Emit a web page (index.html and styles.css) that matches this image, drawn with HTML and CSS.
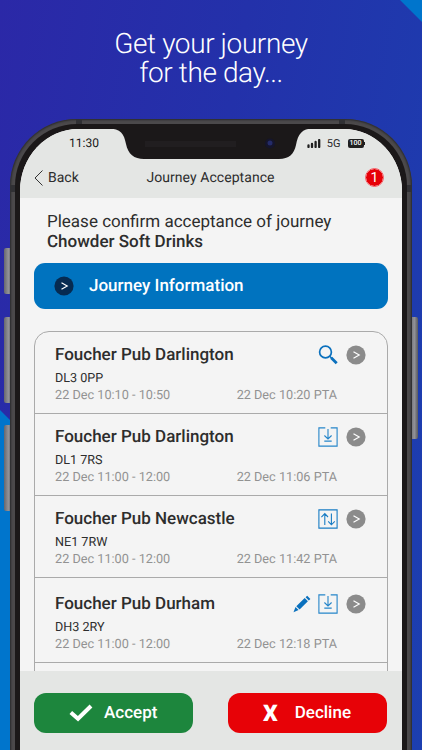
FILE: index.html
```html
<!DOCTYPE html>
<html lang="en">
<head>
<meta charset="utf-8">
<title>Journey Acceptance</title>
<link rel="stylesheet" href="styles.css">
</head>
<body>
<svg class="symbols" width="0" height="0" aria-hidden="true">
  <symbol id="chevron" viewBox="0 0 20 20"><circle cx="10" cy="10" r="9.6" fill="currentColor"/><path d="M7.5 6.7 L13.2 10 L7.5 13.3" fill="none" stroke="#fff" stroke-width="1.2"/></symbol>
  <symbol id="search" viewBox="0 0 20 20"><circle cx="7.5" cy="7" r="5.9" fill="none" stroke="#0a70bd" stroke-width="1.7"/><path d="M11.7 11.2 L14 13.5" stroke="#0a70bd" stroke-width="1.5"/><path d="M13.2 12.8 L18.7 18.3" stroke="#0a70bd" stroke-width="2.8"/></symbol>
  <symbol id="download" viewBox="0 0 20 20"><path d="M7.3 .9 H.9 V19.1 H19.1 V.9 H12.7 M10 2 V11.8 M6.4 8.5 L10 12 L13.6 8.5 M6.3 14.1 H13.7" fill="none" stroke="#2585c9" stroke-width="1.1"/></symbol>
  <symbol id="swap" viewBox="0 0 20 20"><path d="M.9 .9 H19.1 V19.1 H.9Z M6.8 16 V4.6 M3.4 8.2 L6.8 4.6 L10 8 M13.4 4.4 V15.8 M10.2 12.3 L13.4 15.8 L16.8 12.3" fill="none" stroke="#187cc4" stroke-width="1.1"/></symbol>
  <symbol id="pencil" viewBox="0 0 20 20"><path d="M4.3 12.2 L12.7 4 L15.9 7.2 L7.6 15.5Z M13.6 3.2 L15.2 1.7 L18.4 4.9 L16.8 6.4Z M3.5 13 L6.6 16.1 L1.5 18.2Z" fill="#0a70bd"/></symbol>
</svg>
<main class="promo">
  <h1 class="headline">Get your journey<br>for the day...</h1>
  <svg class="backdrop" viewBox="0 0 422 750" aria-hidden="true">
    <defs>
      <linearGradient id="key"><stop stop-color="#67676e"/><stop offset=".55" stop-color="#929298"/><stop offset="1" stop-color="#59595e"/></linearGradient>
    </defs>
    <path d="M400 0 H422 V22Z M0 410 L340 750 H0Z" fill="#0075cc"/>
    <g fill="url(#key)"><rect x="4" y="248" width="8" height="46" rx="2"/><rect x="4" y="317" width="8" height="86" rx="2"/><rect x="4" y="425" width="8" height="86" rx="2"/><rect x="410" y="317" width="8" height="122" rx="2"/></g>
  </svg>
  <div class="phone">
    <div class="bezel">
      <div class="screen">
        <header class="top">
          <div class="status">
            <span class="time">11:30</span>
            <div class="signals">
              <svg width="14" height="9" viewBox="0 0 14 9"><path d="M1.5 8V6.500 M5 8V5 M8.6 8V3 M12.2 8V1" stroke="#202020" stroke-width="2.3" stroke-linecap="round"/></svg>
              <span class="network">5G</span>
              <span class="battery">100</span><i class="nub"></i>
            </div>
          </div>
          <nav class="nav">
            <span class="back"><svg width="9" height="16" viewBox="0 0 9 16"><path d="M8.5 .5 L1 8 L8.5 15.5" fill="none" stroke="#333" stroke-width="1"/></svg>Back</span>
            <span class="page">Journey Acceptance</span>
            <span class="count">1</span>
          </nav>
        </header>
        <section class="content">
          <p class="confirm">Please confirm acceptance of journey<br><b>Chowder Soft Drinks</b></p>
          <div class="info"><svg class="go"><use href="#chevron"/></svg><span>Journey Information</span></div>
          <div class="stops">
            <article class="stop"><div class="name"><h2>Foucher Pub Darlington</h2><svg class="icon"><use href="#search"/></svg><svg class="go"><use href="#chevron"/></svg></div><p class="code">DL3 0PP</p><div class="times"><span>22 Dec 10:10 - 10:50</span><span>22 Dec 10:20 PTA</span></div></article>
            <article class="stop"><div class="name"><h2>Foucher Pub Darlington</h2><svg class="icon"><use href="#download"/></svg><svg class="go"><use href="#chevron"/></svg></div><p class="code">DL1 7RS</p><div class="times"><span>22 Dec 11:00 - 12:00</span><span>22 Dec 11:06 PTA</span></div></article>
            <article class="stop"><div class="name"><h2>Foucher Pub Newcastle</h2><svg class="icon"><use href="#swap"/></svg><svg class="go"><use href="#chevron"/></svg></div><p class="code">NE1 7RW</p><div class="times"><span>22 Dec 11:00 - 12:00</span><span>22 Dec 11:42 PTA</span></div></article>
            <article class="stop tall"><div class="name"><h2>Foucher Pub Durham</h2><svg class="icon pencil"><use href="#pencil"/></svg><svg class="icon"><use href="#download"/></svg><svg class="go"><use href="#chevron"/></svg></div><p class="code">DH3 2RY</p><div class="times"><span>22 Dec 11:00 - 12:00</span><span>22 Dec 12:18 PTA</span></div></article>
          </div>
        </section>
        <footer class="actions">
          <div class="button accept"><svg width="24" height="18" viewBox="0 0 24 18"><path d="M1.8 8.5 L9 14.8 L22 2" fill="none" stroke="#fff" stroke-width="4"/></svg><span>Accept</span></div>
          <div class="button decline"><b>X</b><span>Decline</span></div>
        </footer>
      </div>
    </div>
    <svg class="notch" width="402" height="90" viewBox="10 119 402 90" aria-hidden="true">
      <path d="M108 127 V128.5 C121 128.5 124 134 126 144 C128 154 134 159 144 159 H279 C289 159 294 154 296 145 C298 134 302 128.500 313 128.500 V127Z" fill="#1b1819"/>
      <rect x="145" y="141" width="91" height="6" fill="#211e20"/>
      <circle cx="270" cy="143.500" r="5" fill="#15152c"/><circle cx="270" cy="143" r="2.500" fill="#242b68"/>
      <path d="M76 119 h6 v5 h-6Z M339 119 h6 v5 h-6Z M10 185 h5 v7 h-5Z M407 185 h5 v7 h-5Z" fill="#303034"/>
    </svg>
  </div>
</main>
</body>
</html>
```
FILE: styles.css
```css
* { box-sizing: border-box; }
body, h1, h2, p { margin: 0; }
body { font-family: Roboto, "Liberation Sans", sans-serif; color: #2d2d2d; text-rendering: geometricPrecision; }
.symbols { position: absolute; }
.promo { position: relative; width: 422px; height: 750px; overflow: hidden; background: linear-gradient(100deg, #2b28a7 0%, #2331aa 45%, #1c3fb0 100%); }
.backdrop { position: absolute; inset: 0; width: 422px; height: 750px; }
.headline { position: relative; z-index: 1; height: 119px; padding-top: 29px; text-align: center; color: #fff; font-size: 28px; line-height: 29px; font-weight: 300; letter-spacing: -.4px; }
.phone { position: relative; width: 402px; height: 710px; margin-left: 10px; padding: 5px 5px 0; border-radius: 67px 67px 0 0; background: #4b494b; box-shadow: inset 0 0 2px 1px #29292c; }
.bezel { height: 100%; padding: 4.500px 5px 0; border-radius: 62px 62px 0 0; background: #1b1819; }
.screen { display: flex; flex-direction: column; height: 621.500px; overflow: hidden; border-radius: 58px 58px 0 0 / 62px 62px 0 0; background: #f4f4f4; }
.notch { position: absolute; left: 0; top: 0; }
.top { flex: none; height: 69px; background: #e4e6e4; }
.status { display: flex; justify-content: space-between; align-items: center; height: 29px; padding: 0 37px 0 49px; }
.time { font-size: 12px; color: #151515; }
.signals { display: flex; align-items: center; font-size: 11px; }
.network { margin: 0 7px 0 6px; }
.battery { width: 16px; height: 9px; border-radius: 2px; background: #202020; color: #fff; text-align: center; font-size: 7px; line-height: 9px; font-weight: 500; }
.nub { width: 1.5px; height: 3px; background: #202020; }
.nav { display: grid; grid-template-columns: 1fr auto 1fr; align-items: center; height: 40px; padding: 0 18px 0 14px; font-size: 14px; }
.back { display: flex; align-items: center; gap: 5px; }
.page { padding: 1px 0 0 3px; letter-spacing: .06px; }
.count { justify-self: end; width: 19px; height: 19px; border: 1px solid #fff; outline: 1px solid #ee5960; outline-offset: -1px; border-radius: 50%; background: #e60007; color: #fff; text-align: center; line-height: 18px; }
.content { flex: none; height: 473px; padding: 14px 14px 0; overflow: hidden; }
.confirm { height: 51px; padding-left: 13px; font-size: 17px; line-height: 20px; }
.confirm b { font-weight: 500; }
.info { display: flex; align-items: center; gap: 15px; height: 46px; padding-left: 20px; border-radius: 11px; background: #0073bf; color: #fff; font-size: 17px; font-weight: 500; }
.info span { padding-top: 1px; }
.info .go { color: #062b51; }
.go { flex: none; width: 20px; height: 20px; color: #8b8b8b; }
.stops { height: 360px; margin-top: 22px; border: 1px solid #aaa; border-radius: 15px 15px 0 0; }
.stop { height: 82px; padding: 13px 21px 0 20px; border-bottom: 1px solid #aaa; }
.tall { height: 85px; padding-top: 16px; }
.name { display: flex; align-items: center; height: 20px; }
.name h2 { flex: 1; font-size: 17px; line-height: 20px; font-weight: 500; }
.icon { width: 20px; height: 20px; margin-right: 8px; }
.pencil { margin-right: 6px; }
.code { margin-top: 6px; font-size: 12.6px; line-height: 16px; }
.times { display: flex; justify-content: space-between; padding-right: 29px; color: #929292; font-size: 12.7px; line-height: 17px; }
.actions { display: flex; justify-content: space-between; flex: 1; padding: 22px 15px 18px 14px; background: #e4e6e4; }
.button { display: flex; align-items: center; width: 159px; height: 40px; border-radius: 12px; color: #fff; font-size: 17px; font-weight: 500; }
.button span { padding-top: 1px; }
.accept { gap: 11px; padding-left: 35px; background: #1d863d; }
.decline { gap: 17px; padding-left: 35px; background: #e70207; }
.decline b { padding-top: 1px; font-size: 23px; font-weight: 900; }
```
